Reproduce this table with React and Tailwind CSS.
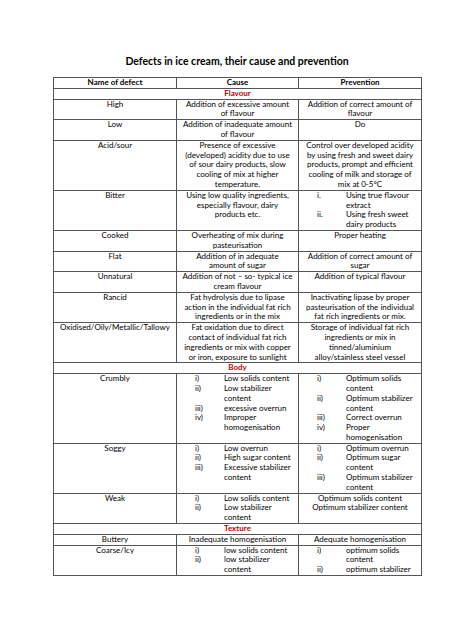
import React from "react";

const L = ({ lines }) => (
  <>
    {lines.map((t, i) => (
      <div key={i} className="whitespace-nowrap">{t}</div>
    ))}
  </>
);

const List = ({ items }) => (
  <div className="pl-[18px]">
    {items.map(([m, lines], i) => (
      <div key={i} className="flex text-left">
        <div className="w-[29px] shrink-0 whitespace-nowrap">{m}</div>
        <div>
          {lines.map((t, j) => (
            <div key={j} className="whitespace-nowrap">{t}</div>
          ))}
        </div>
      </div>
    ))}
  </div>
);

const rows = [
  { sec: "Flavour" },
  { n: "High", c: ["Addition of excessive amount", "of flavour"], p: ["Addition of correct amount of", "flavour"] },
  { n: "Low", c: ["Addition of inadequate amount", "of flavour"], p: ["Do"] },
  {
    n: "Acid/sour",
    c: ["Presence of excessive", "(developed) acidity due to use", "of sour dairy products, slow", "cooling of mix at higher", "temperature."],
    p: ["Control over developed acidity", "by using fresh and sweet dairy", "products, prompt and efficient", "cooling of milk and storage of", "mix at 0-5°C"],
  },
  {
    n: "Bitter",
    c: ["Using low quality ingredients,", "especially flavour, dairy", "products etc."],
    pl: [["i.", ["Using true flavour", "extract"]], ["ii.", ["Using fresh sweet", "dairy products"]]],
  },
  { n: "Cooked", c: ["Overheating of mix during", "pasteurisation"], p: ["Proper heating"] },
  { n: "Flat", c: ["Addition of in adequate", "amount of sugar"], p: ["Addition of correct amount of", "sugar"] },
  { n: "Unnatural", c: ["Addition of not – so- typical ice", "cream flavour"], p: ["Addition of typical flavour"] },
  {
    n: "Rancid",
    c: ["Fat hydrolysis due to lipase", "action in the individual fat rich", "ingredients or in the mix"],
    p: ["Inactivating lipase by proper", "pasteurisation of the individual", "fat rich ingredients or mix."],
  },
  {
    n: "Oxidised/Oily/Metallic/Tallowy",
    c: ["Fat oxidation due to direct", "contact of individual fat rich", "ingredients or mix with copper", "or iron, exposure to sunlight"],
    p: ["Storage of individual fat rich", "ingredients or mix in", "tinned/aluminium", "alloy/stainless steel vessel"],
  },
  { sec: "Body" },
  {
    n: "Crumbly",
    cl: [["i)", ["Low solids content"]], ["ii)", ["Low stabilizer", "content"]], ["iii)", ["excessive overrun"]], ["iv)", ["Improper", "homogenisation"]]],
    pl: [["i)", ["Optimum solids", "content"]], ["ii)", ["Optimum stabilizer", "content"]], ["iii)", ["Correct overrun"]], ["iv)", ["Proper", "homogenisation"]]],
  },
  {
    n: "Soggy",
    cl: [["i)", ["Low overrun"]], ["ii)", ["High sugar content"]], ["iii)", ["Excessive stabilizer", "content"]]],
    pl: [["i)", ["Optimum overrun"]], ["ii)", ["Optimum sugar", "content"]], ["iii)", ["Optimum stabilizer", "content"]]],
  },
  {
    n: "Weak",
    cl: [["i)", ["Low solids content"]], ["ii)", ["Low stabilizer", "content"]]],
    p: ["Optimum solids content", "Optimum stabilizer content"],
  },
  { sec: "Texture" },
  { n: "Buttery", c: ["Inadequate homogenisation"], p: ["Adequate homogenisation"] },
  {
    n: "Coarse/Icy",
    cl: [["i)", ["low solids content"]], ["ii)", ["low stabilizer", "content"]]],
    pl: [["i)", ["optimum solids", "content"]], ["ii)", ["optimum stabilizer"]]],
  },
];

const td = "border border-[#555555] p-0 align-top text-center";

export default function App() {
  return (
    <div
      className="w-[474px] h-[632px] bg-white text-[#000000] overflow-hidden"
      style={{ fontFamily: "Lato, 'Open Sans', sans-serif" }}
    >
      <div className="pt-[54px] h-[77px] text-center font-bold text-[10.5px] leading-[14px]">
        Defects in ice cream, their cause and prevention
      </div>
      <table className="ml-[53px] w-[368px] border-collapse table-fixed text-[8px] leading-[9.8px]">
        <colgroup>
          <col className="w-[123px]" />
          <col className="w-[122px]" />
          <col className="w-[123px]" />
        </colgroup>
        <tbody>
          <tr className="font-bold">
            <td className={td}>Name of defect</td>
            <td className={td}>Cause</td>
            <td className={td}>Prevention</td>
          </tr>
          {rows.map((r, i) =>
            r.sec ? (
              <tr key={i}>
                <td colSpan={3} className={td + " font-bold text-[#c00000]"}>
                  {r.sec}
                </td>
              </tr>
            ) : (
              <tr key={i}>
                <td className={td}>
                  <div className="whitespace-nowrap">{r.n}</div>
                </td>
                <td className={td}>{r.cl ? <List items={r.cl} /> : <L lines={r.c} />}</td>
                <td className={td}>{r.pl ? <List items={r.pl} /> : <L lines={r.p} />}</td>
              </tr>
            )
          )}
        </tbody>
      </table>
    </div>
  );
}
